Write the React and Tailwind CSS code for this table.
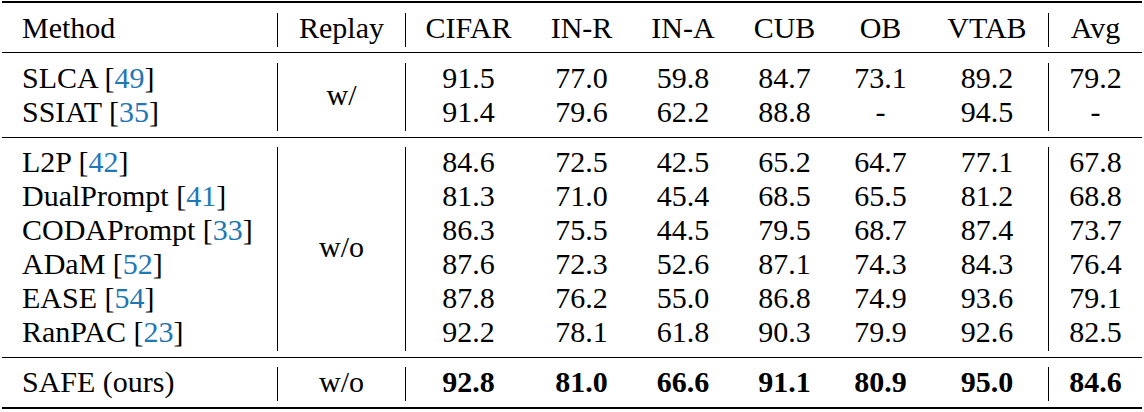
const cols = 'grid grid-cols-[275px_128px_126px_101px_102px_101px_91px_122px_94px]';
const ff = "font-['Liberation_Serif','Times_New_Roman',serif]!";

const groups = [
  {
    replay: 'w/',
    rows: [
      ['SLCA', '49', ['91.5', '77.0', '59.8', '84.7', '73.1', '89.2'], '79.2'],
      ['SSIAT', '35', ['91.4', '79.6', '62.2', '88.8', '-', '94.5'], '-'],
    ],
  },
  {
    replay: 'w/o',
    rows: [
      ['L2P', '42', ['84.6', '72.5', '42.5', '65.2', '64.7', '77.1'], '67.8'],
      ['DualPrompt', '41', ['81.3', '71.0', '45.4', '68.5', '65.5', '81.2'], '68.8'],
      ['CODAPrompt', '33', ['86.3', '75.5', '44.5', '79.5', '68.7', '87.4'], '73.7'],
      ['ADaM', '52', ['87.6', '72.3', '52.6', '87.1', '74.3', '84.3'], '76.4'],
      ['EASE', '54', ['87.8', '76.2', '55.0', '86.8', '74.9', '93.6'], '79.1'],
      ['RanPAC', '23', ['92.2', '78.1', '61.8', '90.3', '79.9', '92.6'], '82.5'],
    ],
  },
];

const cell = `${ff} leading-[29px] pb-[5px] text-center`;
const first = `${ff} leading-[29px] pb-[5px] pl-[20px]`;

const Row = ({ method, cite, values, avg, replay, span, bold }) => (
  <>
    <div className={first}>
      {method}
      {cite && (
        <>
          {' '}[<span className={`${ff} text-[#1f77b4]`}>{cite}</span>]
        </>
      )}
    </div>
    {replay && (
      <div
        className={`${ff} border-l border-black flex items-center justify-center pb-[5px] leading-[29px] ${span === 6 ? 'row-span-6' : span === 2 ? 'row-span-2' : ''}`}
      >
        {replay}
      </div>
    )}
    {values.map((v, i) => (
      <div key={i} className={`${cell} ${i === 0 ? 'border-l border-black' : ''} ${bold ? 'font-bold' : ''}`}>
        {v}
      </div>
    ))}
    <div className={`${cell} border-l border-black ${bold ? 'font-bold' : ''}`}>{avg}</div>
  </>
);

export default function App() {
  return (
    <div className={`w-[1144px] h-[412px] bg-white text-black text-[30px] pl-[2px] pt-[1px] ${ff}`}>
      <div className="w-[1140px]">
        <div className="h-[2px] bg-black" />

        <div className={`${cols} pt-[10px] pb-[5px]`}>
          <div className={first}>Method</div>
          <div className={`${cell} border-l border-black`}>Replay</div>
          <div className={`${cell} border-l border-black`}>CIFAR</div>
          <div className={cell}>IN-R</div>
          <div className={cell}>IN-A</div>
          <div className={cell}>CUB</div>
          <div className={cell}>OB</div>
          <div className={cell}>VTAB</div>
          <div className={`${cell} border-l border-black`}>Avg</div>
        </div>

        {groups.map((g, gi) => (
          <div key={gi}>
            <div className="h-px bg-black" />
            <div className={`${cols} ${gi === 0 ? 'pt-[10px] pb-[6px]' : 'pt-[9px] pb-[6px]'}`}>
              {g.rows.map((r, ri) => (
                <Row
                  key={ri}
                  method={r[0]}
                  cite={r[1]}
                  values={r[2]}
                  avg={r[3]}
                  replay={ri === 0 ? g.replay : null}
                  span={g.rows.length}
                />
              ))}
            </div>
          </div>
        ))}

        <div className="h-px bg-black" />
        <div className={`${cols} pt-[9px] pb-[6px]`}>
          <Row
            method="SAFE (ours)"
            values={['92.8', '81.0', '66.6', '91.1', '80.9', '95.0']}
            avg="84.6"
            replay="w/o"
            span={1}
            bold
          />
        </div>
        <div className="h-[2px] bg-black" />
      </div>
    </div>
  );
}
